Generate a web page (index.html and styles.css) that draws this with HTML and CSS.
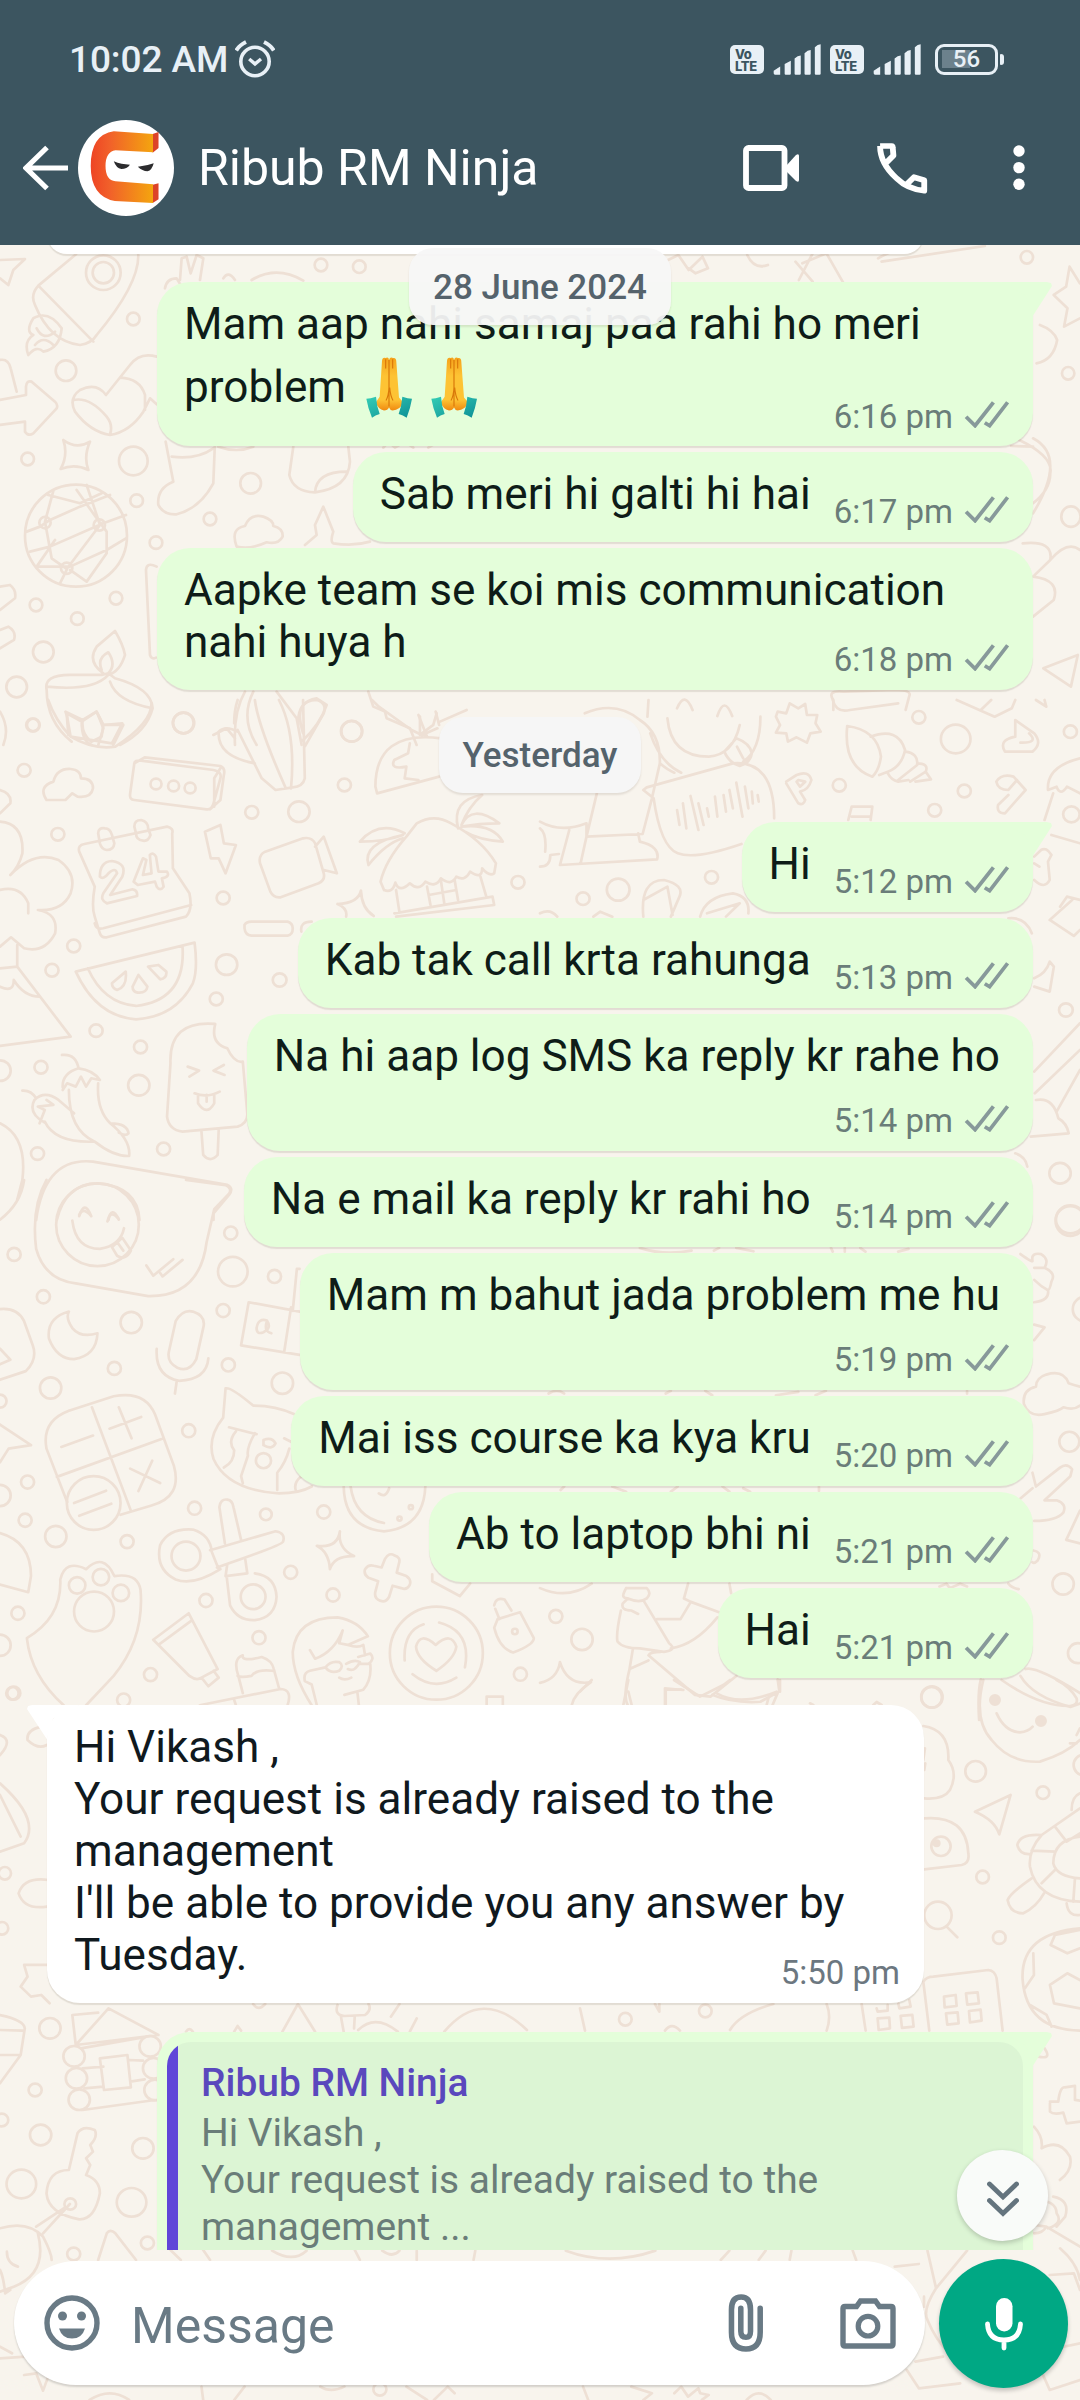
FILE: index.html
```html
<!DOCTYPE html>
<html lang="en">
<head>
<meta charset="utf-8">
<title>Ribub RM Ninja</title>
<link rel="stylesheet" href="styles.css">
</head>
<body>
<svg class="defs" aria-hidden="true">
  <defs>
    <linearGradient id="sleeve" x1="0" y1="0" x2="1" y2="1"><stop offset="0" stop-color="#35cdb5"/><stop offset="1" stop-color="#0d8f96"/></linearGradient>
    <linearGradient id="skin" x1="0" y1="0" x2="0" y2="1"><stop offset="0" stop-color="#f5a31c"/><stop offset=".35" stop-color="#fdc334"/><stop offset=".8" stop-color="#fdc334"/><stop offset="1" stop-color="#f08a10"/></linearGradient>
    <linearGradient id="magnet" x1="0" y1="0" x2="1" y2="0"><stop offset="0" stop-color="#ee4424"/><stop offset=".3" stop-color="#f1602a"/><stop offset="1" stop-color="#f4a50f"/></linearGradient>
    <symbol id="ticks" viewBox="1232 785 130 82" preserveAspectRatio="none">
      <path d="M1238 833L1264 860L1317 789M1292 851L1306 860L1358 789" fill="none" stroke="#87999a" stroke-width="11"/>
    </symbol>
    <symbol id="pray" viewBox="1098 333 138 184" preserveAspectRatio="none">
      <path d="M1146 345Q1147 333 1157 336Q1166 332 1167 342Q1170 332 1179 336Q1189 334 1189 348L1197 455L1210 470Q1200 493 1178 494Q1170 493 1167 485Q1163 494 1152 494Q1134 490 1127 470L1139 453Z" fill="url(#skin)"/>
      <path d="M1167 342V482M1157 340V368M1178 340V368M1167 425Q1166 450 1158 464M1169 425Q1171 450 1179 464" fill="none" stroke="#d9780a" stroke-width="3.5"/>
      <path d="M1099 459Q1111 459 1128 453Q1130 482 1139 505Q1126 508 1116 516Q1104 489 1099 459ZM1236 459Q1224 459 1207 453Q1205 482 1196 505Q1209 508 1220 516Q1231 489 1236 459Z" fill="url(#sleeve)"/>
    </symbol>
    <symbol id="bars" viewBox="676 132 140 94" preserveAspectRatio="none">
      <path d="M678 213L697 200V225H682Q678 225 678 221ZM710 193L728 183V222Q728 225 725 225H713Q710 225 710 222ZM739 176Q748 167 757 167V222Q757 225 754 225H742Q739 225 739 222ZM768 160Q777 150 786 150V222Q786 225 783 225H771Q768 225 768 222ZM798 142Q806 133 815 133V222Q815 225 812 225H801Q798 225 798 222Z" fill="#e8f0f6"/>
    </symbol>
  </defs>
</svg>

<header class="top">
  <div class="status">
    <span class="clock">10:02 AM</span>
    <svg class="alarm" viewBox="0 0 40 38"><g fill="none" stroke="#e8f0f6"><circle cx="20" cy="21.5" r="14.2" stroke-width="3.6"/><path d="M14.2 19L20 24L26 19" stroke-width="3.4"/><path d="M1.2 10.5Q4.5 5 11 2M38.8 10.5Q35.500 5 29 2" stroke-width="4"/></g></svg>
    <div class="radios">
      <span class="volte"><b>Vo</b><b>LTE</b></span>
      <svg class="bars"><use href="#bars"/></svg>
      <span class="volte"><b>Vo</b><b>LTE</b></span>
      <svg class="bars"><use href="#bars"/></svg>
      <span class="battery">56</span><i class="nub"></i>
    </div>
  </div>
  <div class="appbar">
    <svg class="back" viewBox="0 0 45 46"><path d="M45 23H4M24 2.500L3 23L24 43.500" fill="none" stroke="#fff" stroke-width="5.200"/></svg>
    <svg class="avatar" viewBox="226 360 279 288" preserveAspectRatio="none">
      <ellipse cx="365.500" cy="504" rx="139.500" ry="144" fill="#fff"/>
      <path d="M443 402L460 396V444L443 458ZM443 609L460 598V550L443 554Z" fill="#dc4328"/>
      <path d="M330 394L444 402V457L335 451Q306 456 306 498Q306 541 335 544L444 553V609L333 603Q263 590 263 498Q263 404 330 394Z" fill="url(#magnet)"/>
      <path d="M330 484Q352 494 377 494Q368 507 352 507Q337 505 330 484ZM446 490Q426 498 400 500Q413 513 428 514Q441 511 446 490Z" fill="#2c2c2e"/>
    </svg>
    <h1 class="title">Ribub RM Ninja</h1>
    <svg class="video" viewBox="0 0 56 46"><rect x="3" y="3" width="38.500" height="40" rx="2.500" fill="none" stroke="#fff" stroke-width="5.800"/><path d="M43 21L53 10Q56 8 56 11V35Q56 38 53 36L43 26Z" fill="#fff"/></svg>
    <svg class="call" viewBox="980 428 149 152" preserveAspectRatio="none"><path d="M989 437H1023Q1026 437 1026 442L1028 465L1004 490M989 437Q989 489 1037 533Q1070 566 1118 570V539L1088 530L1067 551" fill="none" stroke="#fff" stroke-width="17" stroke-linejoin="round"/></svg>
    <svg class="more" viewBox="0 0 12 46"><g fill="#fff"><circle cx="6" cy="6" r="5.700"/><circle cx="6" cy="22.600" r="5.700"/><circle cx="6" cy="39.200" r="5.700"/></g></svg>
  </div>
</header>

<main class="chat">
  <svg class="wallpaper" viewBox="0 245 1080 2155" aria-hidden="true">
    <g transform="translate(0 245) scale(.3333)">
      <path d="M0 45L75 42L40 75L25 120L0 100M228 28L115 122Q90 150 105 180Q150 290 240 300Q275 295 290 270Q440 90 410 0M115 122L280 290M100 220Q75 260 100 270Q70 290 85 330Q110 300 130 320Q180 310 185 250Q150 200 110 215ZM110 250Q130 290 165 260M105 300Q130 270 160 300M0 540L75 530V560Q85 575 100 565L170 490Q175 480 165 470L95 410Q80 405 78 425V450L0 465M0 345Q25 340 32 370L50 440M470 335Q420 320 390 360L318 450Q290 410 240 435Q205 460 225 500Q270 560 330 570Q390 560 430 500L450 460L470 478M360 398Q420 400 435 450V495M220 465Q270 455 320 515Q340 540 330 568M190 585Q230 615 270 590Q250 635 265 675Q225 655 182 672Q205 630 190 585Z"/>
      <path d="M497 590L520 710Q470 730 475 780Q490 810 530 808Q600 790 640 715L645 590M515 635Q590 645 640 610M655 605Q710 625 760 605M880 605L868 690Q880 740 945 742Q1045 730 1050 650L1045 605M945 742Q950 680 1040 680M1150 608Q1165 585 1185 608L1215 590L1240 608M1285 608L1315 590M915 900L950 870L945 840L970 785L1000 860Q990 890 1000 895Q1060 905 1110 890M710 905Q690 850 735 843Q750 805 790 815Q820 825 820 843Q850 850 848 875Q835 900 800 892Q750 915 710 905ZM540 105L545 40L560 35L572 85L590 30L610 40L600 105M495 130Q500 100 530 100L545 125M755 105Q830 60 910 107M670 100Q685 75 705 105"/>
      <path d="M160 738L135 830L155 940L200 972L300 840L260 720M145 750L240 775L305 745M80 860L120 845L150 825L240 785L330 750M90 920L150 905L310 835L378 810M110 965L165 885M115 965L210 965L320 915L378 880M210 975L260 1010L320 925V860L290 820L230 735M200 975L180 1015"/>
      <circle cx="228" cy="872" r="153"/><circle cx="135" cy="833" r="17"/><circle cx="298" cy="840" r="17"/><circle cx="200" cy="970" r="17"/>
      <path d="M470 965Q440 950 438 975L450 1230Q455 1245 468 1238M0 1025L30 1020Q50 1035 45 1060L0 1095M0 1155L25 1145Q50 1160 42 1185L0 1210M310 1285Q260 1250 290 1205L345 1158Q370 1200 375 1230Q360 1280 325 1290M305 1275Q290 1240 325 1222Q350 1260 325 1285M140 1335Q130 1290 210 1290L305 1290L325 1285L345 1300Q455 1330 458 1390Q440 1460 360 1500M140 1325Q280 1340 325 1290M140 1335Q140 1430 215 1490M330 1310Q350 1370 458 1390M205 1470L200 1405L245 1430L290 1400L310 1440L370 1440L340 1500M245 1430Q245 1490 275 1500M290 1400L310 1450L295 1500M0 1400Q30 1450 10 1500M735 1340Q700 1400 705 1500M760 1340Q720 1420 770 1500M830 1340L890 1420L905 1500M895 1440Q890 1370 950 1360L980 1380Q960 1440 905 1490M640 1470L680 1450L705 1480M1105 1340L1120 1385L1155 1400L1160 1420L1230 1450L1250 1500M1260 1415V1470L1300 1440L1310 1405M1320 1430L1400 1395"/>
      <circle cx="310" cy="83" r="52"/><circle cx="310" cy="83" r="32"/><circle cx="198" cy="377" r="31"/><circle cx="400" cy="648" r="43"/><circle cx="83" cy="642" r="19"/><circle cx="410" cy="767" r="19"/><circle cx="752" cy="715" r="31"/><circle cx="630" cy="822" r="19"/><circle cx="468" cy="893" r="19"/><circle cx="400" cy="222" r="19"/><circle cx="963" cy="60" r="19"/><circle cx="1078" cy="65" r="19"/><circle cx="108" cy="1080" r="19"/><circle cx="348" cy="1060" r="19"/><circle cx="232" cy="1121" r="19"/><circle cx="130" cy="1221" r="31"/><circle cx="50" cy="1326" r="31"/><circle cx="100" cy="1440" r="19"/><circle cx="550" cy="1434" r="31"/><circle cx="1055" cy="1459" r="31"/>
    </g>
    <g transform="translate(0 240) scale(.6887 .3333)">
      <path d="M970 60L985 45L1000 90L1020 50L1028 85L1010 100L1000 85M1085 45Q1095 90 1115 75M1155 65L1180 125M1165 70L1200 40L1225 130M1180 40L1160 120M1275 55Q1300 25 1325 20M1280 65L1430 18M1530 165L1548 140L1553 80L1568 130M1530 165L1550 205L1545 260L1568 235M1510 255Q1530 270 1535 300Q1530 360 1505 370M1500 595Q1550 650 1500 820M1480 600Q1530 650 1525 700Q1525 750 1500 790M1485 910Q1530 900 1525 960L1500 1010M1525 960Q1550 900 1568 930M1500 1010Q1540 1020 1530 1080L1500 1130M1515 1285L1565 1245L1555 1340ZM1500 620L1468 618M1210 1380Q1200 1350 1225 1355L1300 1350Q1325 1350 1320 1370L1315 1410M1210 1380V1410"/>
      <ellipse cx="1491" cy="52" rx="9" ry="19"/><ellipse cx="1551" cy="400" rx="9" ry="19"/><ellipse cx="1555" cy="830" rx="14" ry="31"/>
    </g>
    <g transform="translate(0 700) scale(.3444 .3333)">
      <path d="M140 0Q160 60 205 110Q270 150 335 140Q440 70 440 10M195 50L190 35L240 60L280 35L300 75L355 70L325 130L205 110ZM240 60Q235 100 265 125L295 110L300 75M135 300Q110 260 155 245Q165 205 205 207Q235 210 235 235Q270 235 270 265Q265 295 225 290L210 280L190 300ZM390 190Q390 180 410 182L620 210Q645 215 640 235L620 310Q615 330 600 328L390 300Q375 300 378 280ZM390 190L420 172L640 198Q655 205 650 225L640 300L610 328M640 205L622 235V320M0 270Q35 280 30 310L0 340M680 70Q680 30 690 0M740 0Q750 80 830 265M810 0Q860 100 845 265M880 0L885 235Q880 260 850 262L800 270L760 235L690 90M880 100Q850 0 920 0Q950 10 940 40L885 140M740 190Q630 170 635 95Q655 75 690 95M1080 0L1100 20L1195 90L1225 105L1270 85M1215 45L1240 110M1265 35L1275 75M1280 115Q1090 90 1090 260L1095 280L1275 230M1145 180L1185 160L1190 130M1145 180Q1130 210 1180 200L1175 235L1215 240"/>
      <path d="M0 365Q70 370 65 460Q55 500 30 525Q100 450 170 480Q225 520 205 580Q180 635 110 630Q170 640 160 700Q130 760 70 745L32 712L0 740M0 570Q60 555 82 610V640M50 735V800L205 1010L0 1038M0 805L50 800M0 860Q40 880 40 840Q70 890 115 890M275 560L230 455Q225 435 245 432L485 380Q505 385 500 400L502 505M275 560Q265 620 275 650L290 700Q295 715 310 712L540 650Q560 630 550 580L502 505M275 670Q280 690 300 685L555 615"/>
      <path d="M285 400Q285 382 305 385Q320 385 325 405L332 430Q330 450 310 450Q295 448 290 430ZM390 380Q390 360 410 360Q430 365 430 385L437 405Q430 425 415 422Q395 420 395 400ZM290 530Q290 485 325 483Q370 490 355 530L320 585L385 568Q400 570 398 588L310 610Q290 600 300 580L340 520Q335 500 315 520Q300 540 290 530ZM388 545L415 475L425 480L415 525L440 520L435 465Q445 455 453 470L460 515L485 515Q495 530 470 535L475 560Q465 575 455 560L450 545L400 555ZM595 395L640 375L650 430L685 435L655 520L635 475L612 475ZM770 455L880 415Q905 410 915 430L940 520Q945 540 925 550L815 592Q795 595 785 575L755 490Q750 465 770 455ZM915 440L940 410L978 520L940 510M710 675Q715 665 730 665H835Q850 670 850 685Q850 705 835 707H730Q712 705 710 685ZM980 612Q1040 610 1048 572Q1050 625 1085 648M980 612Q1010 625 1005 650M220 815L565 728Q575 810 560 850Q510 950 395 958Q280 950 220 815ZM255 805Q300 910 395 918Q540 900 530 740M325 850L365 815Q370 860 340 870Q325 865 325 850ZM385 860L402 825L428 860Q425 880 400 878Q385 875 385 860ZM430 800L460 795L483 815Q485 835 465 838ZM875 695Q870 665 905 665"/>
      <path d="M1115 570L1105 545Q1120 480 1180 410L1210 370Q1260 340 1310 370Q1400 420 1440 490L1435 520M1115 570Q1140 580 1148 548Q1160 580 1190 550Q1215 575 1235 545Q1265 565 1280 535Q1310 560 1325 530Q1350 545 1365 515Q1400 540 1400 505Q1420 530 1435 520M1150 570L1160 638M1145 640L1430 590L1435 615L1150 650M1395 530L1412 590M1240 560L1250 615M1280 540L1290 610M1320 540L1330 600M1245 585L1325 570M1175 400Q1100 360 1045 425Q1120 425 1170 405Q1050 430 1070 495M1170 415Q1120 430 1070 495M1330 385Q1310 300 1400 285Q1360 320 1340 375Q1370 310 1450 370Q1390 370 1340 380Q1430 370 1460 425Q1390 420 1350 395"/>
      <path d="M625 972Q490 960 495 1090L485 1250Q490 1290 530 1295L690 1280Q720 1270 718 1240L705 1085Q680 1090 660 1045Q610 1030 625 972ZM545 1100L578 1112L550 1130M650 1095L620 1112L652 1125M565 1180Q600 1195 638 1175M575 1185V1210Q600 1250 622 1210V1185M600 1185V1205M585 1295L590 1365Q610 1390 632 1365L635 1290M180 1065Q220 1060 228 1105M182 1162Q180 1120 228 1105Q270 1110 290 1140L265 1135L250 1160L235 1130L220 1160L195 1150L182 1170M200 1170Q200 1290 275 1325Q330 1370 375 1368Q380 1320 320 1270Q280 1230 285 1150M65 1172Q90 1170 105 1195M130 1268Q80 1240 100 1200Q130 1170 170 1200L215 1240M115 1270L130 1230L110 1220L155 1215L135 1200M130 1265Q160 1330 275 1325M320 1270Q370 1270 373 1300Q365 1310 345 1298M0 1270Q80 1310 65 1440L50 1500M105 1560Q130 1370 270 1385L660 1455Q680 1465 665 1485L620 1540V1560M165 1560Q190 1450 285 1450Q400 1460 405 1560M230 1545Q240 1520 262 1545M315 1560Q320 1530 343 1555"/>
      <circle cx="95" cy="75" r="19"/><circle cx="70" cy="211" r="19"/><circle cx="533" cy="69" r="31"/><circle cx="1021" cy="94" r="31"/><circle cx="1000" cy="255" r="19"/><circle cx="453" cy="252" r="16"/><circle cx="504" cy="258" r="16"/><circle cx="552" cy="264" r="16"/><circle cx="731" cy="337" r="19"/><circle cx="868" cy="335" r="31"/><circle cx="168" cy="403" r="19"/><circle cx="648" cy="594" r="19"/><circle cx="214" cy="738" r="19"/><circle cx="151" cy="811" r="19"/><circle cx="658" cy="794" r="31"/><circle cx="812" cy="840" r="20"/><circle cx="628" cy="897" r="19"/><circle cx="279" cy="992" r="19"/><circle cx="408" cy="1041" r="19"/><circle cx="119" cy="1102" r="19"/><circle cx="0" cy="1112" r="31"/><circle cx="403" cy="1156" r="31"/><circle cx="475" cy="1347" r="19"/><circle cx="109" cy="1361" r="19"/><circle cx="1504" cy="547" r="19"/>
    </g>
    <g transform="translate(540 700) scale(.3444 .3333)">
      <path d="M130 40Q220 0 290 60Q350 100 348 190Q370 210 390 218M348 190L325 295L298 402L135 410L165 280M398 25Q420 -30 443 30M515 48Q535 -15 558 48M370 55Q380 170 490 170Q560 165 580 75M535 155L570 115Q610 130 615 160Q610 190 580 198Q550 190 535 155ZM572 140L590 175M312 50L315 0M320 100Q350 190 410 218M640 50Q640 150 590 185M0 365Q60 400 135 370V410L118 490M85 390L58 495L340 478Q350 440 290 425L285 400M0 500Q30 500 30 465L55 462M0 385Q20 400 15 455M310 262L560 190Q680 180 680 355M310 262L300 270L330 295Q350 440 400 460Q450 480 585 432M398 330L405 375M415 310L425 385M437 288L460 390M460 310L475 375M485 325L490 350M508 290L515 350M533 285L540 335M550 270L560 325M570 248L588 350M595 260L605 325M615 275L618 310M632 285L635 305"/>
      <path d="M685 50L690 35L715 40L725 10L750 25L770 12L775 45L805 45L800 70L815 95L785 100L775 128L745 112L720 125L715 100L685 98L697 75ZM892 78Q980 90 990 170Q985 210 965 230Q880 200 892 78ZM960 110Q1040 80 1060 150Q1050 200 1010 215L985 225M1060 155Q1100 160 1095 195L1040 240M1095 190Q1130 190 1120 215L1075 245M1120 215L1135 238L1090 245M1010 220Q1020 240 1040 245L1070 240M1380 60L1435 100Q1460 130 1430 155H1350Q1330 120 1380 110ZM1420 100Q1450 130 1395 128M715 245L745 225Q780 210 788 240Q780 270 755 275L770 300Q765 318 750 310L715 250M745 245L755 260L770 245L750 240ZM1325 245Q1340 220 1375 230L1410 270L1350 340Q1325 340 1330 315L1360 285M1325 245Q1330 270 1360 270L1385 240M895 360L905 320H965L960 360M905 350H960M1568 175Q1470 200 1475 270L1500 260Q1510 290 1530 260L1568 280M1490 280L1465 360M1485 405L1568 430M850 0Q860 40 900 30L1040 10M1210 0L1320 50L1370 25L1380 0M1280 30L1310 0M1440 0L1470 20L1465 0M1435 470L1455 450Q1470 440 1485 465L1475 485L1480 540Q1465 570 1435 540M1435 490L1450 500M1545 600L1480 660L1550 708L1568 690M1510 620L1530 590L1568 600M1435 835Q1470 820 1480 785L1492 800L1480 875L1435 860M1360 655Q1410 650 1428 700M1568 970L1435 1115M1568 1050L1437 1180M1440 1200Q1490 1190 1505 1255Q1530 1270 1535 1300L1425 1310M1568 1110L1500 1235M300 650Q290 540 360 540Q420 555 405 590L380 650M300 600L370 560L385 645M465 650Q480 590 560 580Q610 590 605 640M485 640L580 610L540 650M0 640Q30 625 50 650M155 650L175 635L210 650M1380 1360Q1410 1370 1415 1400"/>
      <circle cx="1100" cy="52" r="19"/><circle cx="1207" cy="117" r="43"/><circle cx="1540" cy="95" r="19"/><circle cx="869" cy="256" r="19"/><circle cx="1232" cy="273" r="19"/><circle cx="1146" cy="331" r="19"/><circle cx="1543" cy="343" r="24"/><circle cx="498" cy="532" r="19"/><circle cx="227" cy="569" r="33"/><circle cx="125" cy="596" r="19"/><circle cx="1527" cy="930" r="20"/><circle cx="1510" cy="1420" r="31"/><circle cx="1540" cy="1558" r="42"/>
    </g>
    <g transform="translate(0 1180) scale(.3444)">
      <path d="M70 0Q60 70 0 115M135 0Q90 80 105 200Q130 290 220 300L430 337Q580 340 600 180L622 85L665 40Q675 25 655 15L540 0M230 105Q245 55 265 105M312 120Q325 70 345 115M210 118Q220 200 290 200Q350 190 360 140M325 195L355 168L380 205Q365 235 340 220ZM340 180L358 205M425 248L445 278L503 230M465 270L472 280L530 232M0 375Q50 370 70 410L95 480Q110 520 75 555L0 580M0 490L30 522L0 535M200 382Q135 400 142 460Q165 520 215 520Q280 510 283 445Q235 460 210 430Q190 400 200 382ZM510 410Q530 375 560 382Q600 395 590 430L570 520Q550 560 515 545Q485 530 490 500ZM455 490Q450 570 520 583Q600 580 605 518M513 585L508 620M722 355L700 480L870 508M722 355L870 382M845 370L825 500M870 258H862L850 380M745 430Q750 400 775 408Q790 430 765 442Q745 450 745 430M775 410Q765 440 788 445"/>
      <path d="M200 670L330 628Q420 610 450 680L505 830Q530 920 440 945L350 972M200 670Q120 700 135 780L195 935M267 660L380 960M165 862L475 750M178 775L270 742M318 722L410 688M345 660L382 750M378 838L465 880M442 815L402 903M215 938L308 902M230 975L323 940M0 710L90 770L25 780L0 820M655 605Q670 600 735 655Q800 655 855 680M655 605L648 690Q600 750 620 810Q660 900 810 910Q870 910 905 890M665 718L745 738M685 730Q660 760 680 785Q680 820 650 835M740 735Q715 780 720 800L700 860L705 880M765 755Q790 745 800 765Q790 785 765 770ZM825 750L845 760M840 780Q830 820 805 850V900M875 860Q850 880 860 905"/>
      <circle cx="272" cy="938" r="78"/><circle cx="283" cy="130" r="120"/><circle cx="765" cy="815" r="22"/>
      <path d="M998 890Q1000 1010 1115 1020Q1230 1010 1235 890M1018 890Q1030 980 1115 996M1100 910Q1120 925 1130 895M653 1055L637 950Q640 925 660 928Q675 930 678 950L700 1045M610 1075L800 1020Q830 1025 822 1050Q820 1060 630 1125M640 1130Q560 1180 510 1160Q450 1130 465 1060Q490 1010 560 1015Q610 1030 615 1080L635 1130M660 1115L655 1150L718 1142L712 1100M658 1150L668 1235Q690 1280 740 1278Q800 1270 803 1210Q800 1150 740 1142M920 1062Q980 1070 987 1020Q980 1070 1028 1092Q970 1090 958 1130Q955 1080 920 1062ZM1108 1125L1118 1100Q1130 1080 1145 1090Q1165 1095 1158 1115L1152 1140L1180 1150Q1195 1160 1190 1175Q1182 1192 1165 1185L1140 1178L1130 1210Q1120 1228 1105 1222Q1085 1215 1090 1195L1098 1165L1070 1155Q1055 1145 1060 1130Q1070 1115 1085 1120ZM1255 1145V1165L1335 1208L1365 1172"/>
      <path d="M0 1025Q90 1050 90 1150L82 1197L0 1175M185 1525Q90 1440 78 1330Q180 1270 175 1160Q190 1100 250 1130Q300 1080 332 1150Q400 1140 408 1190Q420 1330 330 1440L250 1525M445 1335L548 1258L632 1420L585 1445Q570 1455 550 1440ZM460 1350L555 1280M585 1445L605 1470L635 1445L620 1425M705 1490L692 1440Q675 1390 705 1380Q700 1400 760 1385Q790 1395 795 1420L810 1475M690 1440Q700 1445 730 1440Q745 1420 790 1425M580 1525L815 1478Q850 1480 835 1525M680 1510L685 1525M905 1525Q850 1440 850 1370Q860 1270 980 1270Q1040 1280 1068 1325L1010 1350Q1040 1360 1055 1350L1060 1380M900 1365L915 1390Q970 1370 995 1308L985 1345L1010 1350M945 1415Q960 1395 985 1400Q1000 1410 985 1425Q960 1435 945 1415ZM1005 1405Q1030 1390 1045 1400Q1030 1430 1010 1420M1040 1385L1075 1375Q1090 1390 1070 1405H1045M945 1415L900 1425Q880 1430 885 1455L905 1465L920 1525M1075 1405Q1080 1450 1055 1480L1000 1495M1038 1490L1042 1525M985 1445Q1000 1455 1020 1445M1175 1395Q1170 1310 1230 1290M1275 1285Q1370 1310 1350 1415M1198 1435Q1260 1485 1325 1445M1267 1425Q1210 1390 1208 1355Q1220 1310 1265 1350Q1310 1310 1325 1355Q1320 1390 1267 1425ZM1435 1235Q1440 1210 1465 1218L1485 1250M1435 1300L1445 1275L1510 1255L1550 1330Q1550 1350 1490 1372Q1450 1360 1435 1300ZM1438 1245L1450 1275M1413 1525V1500H1460V1525"/>
      <circle cx="540" cy="1092" r="42"/><circle cx="735" cy="1210" r="36"/><circle cx="224" cy="1177" r="24"/><circle cx="293" cy="1153" r="24"/><circle cx="351" cy="1199" r="24"/><circle cx="273" cy="1253" r="58"/><circle cx="1267" cy="1374" r="135"/><circle cx="1495" cy="1311" r="8"/>
      <circle cx="41" cy="216" r="19"/><circle cx="126" cy="339" r="19"/><circle cx="670" cy="154" r="19"/><circle cx="676" cy="266" r="43"/><circle cx="797" cy="280" r="19"/><circle cx="648" cy="379" r="19"/><circle cx="381" cy="414" r="31"/><circle cx="332" cy="547" r="19"/><circle cx="147" cy="604" r="31"/><circle cx="663" cy="537" r="19"/><circle cx="820" cy="590" r="31"/><circle cx="0" cy="642" r="19"/><circle cx="548" cy="728" r="19"/><circle cx="80" cy="877" r="19"/><circle cx="0" cy="916" r="31"/><circle cx="73" cy="988" r="19"/><circle cx="162" cy="1035" r="31"/><circle cx="369" cy="1050" r="19"/><circle cx="565" cy="953" r="19"/><circle cx="772" cy="971" r="17"/><circle cx="940" cy="964" r="19"/><circle cx="844" cy="1139" r="19"/><circle cx="967" cy="1205" r="19"/><circle cx="598" cy="1221" r="19"/><circle cx="752" cy="1329" r="19"/><circle cx="52" cy="1258" r="19"/><circle cx="0" cy="1351" r="31"/><circle cx="437" cy="1436" r="19"/><circle cx="40" cy="1490" r="19"/><circle cx="359" cy="1510" r="19"/><circle cx="1511" cy="1435" r="19"/><circle cx="1160" cy="983" r="6"/><circle cx="1193" cy="950" r="6"/>
    </g>
    <g transform="translate(540 1180) scale(.3444)">
      <path d="M1395 215Q1430 240 1430 235Q1425 210 1455 215Q1480 230 1465 255Q1500 270 1485 295Q1480 320 1475 320Q1480 350 1435 355M1435 255L1465 255M1435 290Q1455 310 1475 320M1435 420L1465 428L1435 465M1568 600Q1550 595 1535 590Q1520 550 1470 565Q1440 575 1440 600Q1400 610 1405 650Q1420 690 1465 680Q1510 670 1520 660Q1550 670 1568 655M1430 850L1440 890L1510 835Q1530 820 1545 840L1540 860L1465 930L1500 930Q1530 940 1520 965Q1500 990 1435 990M1395 925L1430 895M1568 960L1528 1045L1568 1055M1430 1075Q1460 1080 1445 1105Q1435 1115 1430 1110M0 1185Q80 1220 150 1172M250 1185L245 1195Q235 1215 255 1215L240 1230Q235 1250 265 1250L285 1260M250 1185H310Q325 1200 310 1215Q290 1230 255 1215M235 1250Q220 1320 225 1340Q240 1360 290 1360L360 1370Q400 1365 375 1345L300 1220M340 1275H408L438 1225L520 1255M430 1172L418 1215L438 1225M380 1360Q450 1350 515 1270M270 1360L260 1420Q240 1500 255 1525M260 1420L315 1395M315 1380Q320 1370 350 1370M315 1380L450 1495L495 1500L570 1440M365 1525V1480H410M500 1495Q560 1520 640 1515L695 1485L690 1450M690 1490L675 1525M58 1400Q80 1470 148 1458Q100 1490 92 1525M58 1400Q50 1450 0 1460M1280 1450Q1270 1490 1275 1568M1410 1420Q1440 1410 1568 1490M1395 1440Q1430 1500 1540 1530L1568 1520M1360 1172Q1370 1185 1390 1188M550 1172L555 1200"/>
      <circle cx="1540" cy="119" r="43"/><circle cx="1583" cy="375" r="36"/><circle cx="1537" cy="760" r="29"/><circle cx="1519" cy="1173" r="31"/><circle cx="1562" cy="1374" r="29"/><circle cx="46" cy="1267" r="19"/><circle cx="122" cy="1334" r="31"/><circle cx="1138" cy="1501" r="31"/>
      <path d="M290 197Q360 220 440 205M505 205L520 197M570 197L620 207M845 197L850 208M885 197V208M930 197L945 208M1040 208L1070 200M25 620Q50 605 70 620M365 620L380 612M480 612L500 625M685 625L750 615M800 625L830 612M1240 620V612M60 900L70 890M210 890L250 905M380 905L400 890M530 890L550 905M590 895L610 905M810 890V903M1160 1180L1180 1172L1190 1185L1220 1172L1240 1180"/>
    </g>
    <g transform="translate(580 1680) scale(.3333)">
      <path d="M1210 0Q1180 120 1235 180Q1290 250 1380 245Q1460 220 1500 180M1265 0Q1380 80 1470 78Q1495 75 1490 55Q1470 20 1430 0M1250 100Q1275 155 1320 157Q1345 155 1358 140M1490 190L1470 190M1490 165L1500 145M1030 138Q1110 150 1105 240Q1135 280 1110 330Q1090 360 1033 355M1035 205L1030 240M1036 250L1033 270M1033 415Q1160 405 1165 520Q1170 550 1145 555L1033 568M1185 395L1292 345L1258 463Q1245 420 1185 395ZM1100 740L1132 772M1500 385L1385 465Q1345 510 1350 560Q1370 660 1500 665M1385 465Q1320 460 1312 495Q1320 525 1352 522M1425 440L1460 485L1500 460M1355 512L1425 515M1500 470Q1420 480 1420 550Q1430 590 1500 595M1425 570L1385 610M1355 595Q1290 640 1283 660Q1290 700 1330 700Q1370 680 1392 640M1485 595L1480 665M1460 670Q1465 710 1500 705M1475 390Q1475 350 1500 340M1030 905Q1040 890 1060 890L1225 870Q1245 872 1250 895L1268 1052M1030 905L1048 1052M1092 950L1127 945L1130 978L1094 982ZM1158 940L1193 937L1197 970L1162 974ZM1098 1000L1133 997L1136 1030L1102 1034ZM1167 993L1202 989L1205 1022L1170 1027ZM890 985L893 995L923 992V975M893 1015L928 1013L930 1045L896 1050ZM955 970L958 985L992 980L988 960M962 1008L997 1005L1001 1040L966 1044ZM845 972L857 1052M1500 745Q1320 760 1328 900Q1340 1050 1500 1052M1412 795L1425 765L1500 750M1412 795L1462 820L1500 805M1360 820L1362 885L1335 925M1462 880L1410 915L1422 970L1500 985M1462 880L1500 900M1350 975L1400 1005L1415 1040M740 972Q755 1010 740 1052M450 1050Q480 1000 580 972M225 972L238 995V972M255 1052Q275 1025 300 1052M0 985L15 1052M145 0L130 75M145 35L155 75M255 75V25L310 30M0 35L35 0M282 0L360 50L430 15L450 0M410 40Q480 80 590 35M600 0V35M560 75L565 55M700 75L690 70M880 75L890 66L905 75M1375 1130Q1420 1140 1390 1100M1410 1265H1435Q1440 1220 1455 1222L1485 1218V1260L1500 1262M1410 1270V1295Q1420 1305 1450 1298L1460 1330L1500 1325M1362 1340Q1390 1370 1385 1405Q1440 1375 1470 1430Q1480 1470 1440 1500"/>
      <circle cx="1055" cy="52" r="31"/><circle cx="1187" cy="274" r="31"/><circle cx="1389" cy="338" r="19"/><circle cx="1208" cy="591" r="19"/><circle cx="1258" cy="773" r="19"/><circle cx="1074" cy="706" r="41"/><circle cx="1083" cy="499" r="29"/><circle cx="1512" cy="255" r="31"/><circle cx="136" cy="1018" r="19"/><circle cx="376" cy="993" r="19"/>
      <g class="solid"><circle cx="1245" cy="60" r="14"/><circle cx="1383" cy="123" r="14"/><circle cx="1070" cy="490" r="8"/></g>
    </g>
    <g transform="translate(0 1680) scale(.6887 .3333)">
      <path d="M60 140Q38 150 40 180Q55 210 68 195M0 165Q20 180 0 225M0 310Q60 420 35 490L0 515M0 345L30 470M70 855L35 855L40 890L30 920L45 950L60 945L72 970M70 600Q35 590 27 640Q35 690 68 680"/>
      <ellipse cx="18" cy="40" rx="9" ry="19"/><ellipse cx="7" cy="580" rx="9" ry="19"/><ellipse cx="3" cy="745" rx="9" ry="19"/>
    </g>
    <g transform="translate(0 2000) scale(.3444 .3333)">
      <path d="M0 45Q70 60 72 85L60 165L0 250M0 90L65 92M0 165H58M220 135L315 25L460 105L220 135L210 45L285 38M235 145L415 112M240 205L300 200M375 180L415 182M245 265L300 260M378 245L420 238M240 330L450 300M290 175L370 165L380 262L302 270ZM820 95L865 12L915 95M980 15Q970 45 1000 48L1060 45Q1080 30 1070 12M990 50L998 95M1030 50L1028 85M1040 90Q1090 40 1155 95M1135 50L1160 12M1190 95L1210 55M1290 95Q1400 -40 1530 90M540 95Q550 80 560 95M680 95L690 78L700 92M735 12Q750 35 770 12M200 510L225 400Q240 375 275 390Q285 410 262 435L270 455L250 475L262 495L250 525Q290 540 290 580Q275 660 230 658Q140 640 135 580Q140 510 200 510ZM203 612L125 700M185 625L105 680M0 685Q80 660 125 710Q150 760 150 780M110 700Q140 820 40 860L0 875M20 755Q20 790 52 800M0 810Q10 830 15 880L30 870M0 1040L35 1060M0 1075L75 1070M285 780L310 700Q320 685 335 700L395 780M495 750L525 780M590 750L610 780M790 752Q850 790 890 752M1030 750L1045 780M1110 752Q1140 775 1160 752M1210 780V752M1375 780L1380 752M70 1125L105 1120L125 1172L140 1130M585 1160L590 1200M710 1160L680 1200M930 1160Q960 1180 1000 1160M1180 1160L1240 1200M1260 1200L1300 1160L1320 1180M260 1200Q320 1160 375 1200"/>
      <circle cx="145" cy="85" r="31"/><circle cx="102" cy="270" r="19"/><circle cx="5" cy="360" r="19"/><circle cx="118" cy="405" r="31"/><circle cx="415" cy="445" r="31"/><circle cx="62" cy="552" r="43"/><circle cx="382" cy="607" r="43"/><circle cx="215" cy="169" r="31"/><circle cx="222" cy="235" r="31"/><circle cx="230" cy="299" r="31"/><circle cx="436" cy="139" r="31"/><circle cx="446" cy="205" r="31"/><circle cx="450" cy="270" r="31"/><circle cx="204" cy="612" r="17"/><circle cx="428" cy="729" r="19"/><circle cx="214" cy="762" r="19"/><circle cx="1103" cy="1168" r="19"/>
    </g>
    <g transform="translate(540 2000) scale(.3444 .3333)">
      <path d="M75 752Q200 800 335 752M525 780L550 752M635 780L655 752M725 780L730 752M908 752L918 780M1125 752L1150 865M1240 752L1150 865Q1110 930 1125 960Q1150 1020 1180 1050M1030 800L1100 792M1435 675L1470 680L1568 740M1435 700Q1460 700 1470 680M1510 745Q1560 790 1568 840M1480 825L1550 820L1568 870M1475 1050L1568 1030M1450 1100L1480 1170L1568 1140M1090 1085L1170 1070M1065 1110L1100 1165L1220 1150M1115 890V920M125 1160L140 1200M265 1160L325 1180L300 1200M390 1180L410 1160L430 1190L460 1165L465 1180L490 1185L470 1200M600 1200Q635 1160 670 1200M1435 600Q1500 600 1500 640Q1520 670 1475 685M1490 590Q1540 600 1525 650L1500 680"/>
    </g>
  </svg>

  <section class="thread">
    <div class="bubble in past"></div>
    <div class="bubble out tail wide prayer">
      <p>Mam aap nahi samaj paa rahi ho meri<br><span class="emojiline">problem <svg class="emoji" role="img" aria-label="folded hands"><use href="#pray"/></svg><svg class="emoji" role="img" aria-label="folded hands"><use href="#pray"/></svg></span></p>
      <span class="meta">6:16 pm<svg><use href="#ticks"/></svg></span>
    </div>
    <div class="bubble out"><p>Sab meri hi galti hi hai</p><span class="meta">6:17 pm<svg><use href="#ticks"/></svg></span></div>
    <div class="bubble out wide"><p>Aapke team se koi mis communication<br>nahi huya h</p><span class="meta">6:18 pm<svg><use href="#ticks"/></svg></span></div>

    <div class="day">Yesterday</div>

    <div class="bubble out tail"><p>Hi</p><span class="meta">5:12 pm<svg><use href="#ticks"/></svg></span></div>
    <div class="bubble out"><p>Kab tak call krta rahunga</p><span class="meta">5:13 pm<svg><use href="#ticks"/></svg></span></div>
    <div class="bubble out stacked"><p>Na hi aap log SMS ka reply kr rahe ho</p><span class="meta">5:14 pm<svg><use href="#ticks"/></svg></span></div>
    <div class="bubble out"><p>Na e mail ka reply kr rahi ho</p><span class="meta">5:14 pm<svg><use href="#ticks"/></svg></span></div>
    <div class="bubble out stacked"><p>Mam m bahut jada problem me hu</p><span class="meta">5:19 pm<svg><use href="#ticks"/></svg></span></div>
    <div class="bubble out"><p>Mai iss course ka kya kru</p><span class="meta">5:20 pm<svg><use href="#ticks"/></svg></span></div>
    <div class="bubble out"><p>Ab to laptop bhi ni</p><span class="meta">5:21 pm<svg><use href="#ticks"/></svg></span></div>
    <div class="bubble out"><p>Hai</p><span class="meta">5:21 pm<svg><use href="#ticks"/></svg></span></div>

    <div class="bubble in tail wide"><p>Hi Vikash ,<br>Your request is already raised to the<br>management<br>I'll be able to provide you any answer by<br>Tuesday.</p><span class="meta">5:50 pm</span></div>

    <div class="bubble out tail quoted">
      <blockquote class="quote"><strong>Ribub RM Ninja</strong><p>Hi Vikash ,<br>Your request is already raised to the<br>management ...</p></blockquote>
    </div>
  </section>

  <div class="day floating">28 June 2024</div>
  <button class="jump" aria-label="Scroll to latest"><svg viewBox="0 0 32 36"><path d="M2.500 3L16 16L29.500 3M2.500 19.500L16 32.500L29.500 19.500" fill="none" stroke="#64747e" stroke-width="4.800" stroke-linecap="round"/></svg></button>

  <footer class="composer">
    <div class="field">
      <svg class="smile" viewBox="0 0 56 56"><circle cx="28" cy="28" r="25" fill="none" stroke="#697a85" stroke-width="5.400"/><g fill="#697a85"><circle cx="18.500" cy="21" r="4.500"/><circle cx="37.500" cy="21" r="4.500"/><path d="M15 33.500H41Q38 43.500 28 43.500Q18 43.500 15 33.500Z"/></g></svg>
      <span class="placeholder">Message</span>
      <svg class="clip" viewBox="548 886 104 170" preserveAspectRatio="none"><path d="M641 928V998Q641 1047 600 1047Q558 1047 558 998V932Q558 895 586 895Q613 895 613 932V995Q613 1013 600 1013Q585 1013 585 995V928" fill="none" stroke="#697a85" stroke-width="16" stroke-linecap="round"/></svg>
      <svg class="camera" viewBox="0 0 56 51"><path d="M5 8.500H16.500L20.500 3H35.500L39.500 8.500H51Q53 8.500 53 10.500V46Q53 48 51 48H5Q3 48 3 46V10.500Q3 8.500 5 8.500Z" fill="none" stroke="#697a85" stroke-width="5.400"/><circle cx="28" cy="28.200" r="9.800" fill="none" stroke="#697a85" stroke-width="5.200"/></svg>
    </div>
    <button class="mic" aria-label="Record voice message"><svg viewBox="0 0 38 54"><rect x="11" y="1" width="16.500" height="33.500" rx="8.200" fill="#fff"/><path d="M2.500 27Q3.500 43 19 43Q34.500 43 35.500 27M19 43V51" fill="none" stroke="#fff" stroke-width="4.800" stroke-linecap="round"/></svg></button>
  </footer>
</main>
</body>
</html>
```
FILE: styles.css
```css
* { box-sizing: border-box; margin: 0; padding: 0; }
body { width: 1080px; height: 2400px; overflow: hidden; display: flex; flex-direction: column; font-family: Roboto, "Noto Sans", sans-serif; background: #f8f4ed; }
svg { display: block; flex: none; }
button { border: 0; }
.defs { position: absolute; width: 0; height: 0; }

.top { height: 245px; background: #3c5560; color: #fff; flex: none; }
.status { height: 99px; padding: 38px 76px 0 69px; display: flex; align-items: flex-start; color: #e8f0f6; }
.clock { font-size: 37px; font-weight: 500; line-height: 43px; letter-spacing: -.1px; }
.alarm { width: 40px; height: 38px; margin: 2px 0 0 7px; }
.radios { margin: 6px 0 0 auto; display: flex; align-items: center; height: 31px; }
.volte { width: 34px; height: 29px; border-radius: 5px; background: #e8f0f6; color: #3c5560; font: 800 13px/12px Inter, sans-serif; letter-spacing: -.4px; padding: 3px 0 0 5px; display: flex; flex-direction: column; }
.volte b { font-weight: 800; }
.bars { width: 48px; height: 31px; margin: 0 9px; }
.battery { width: 63px; height: 31px; margin-left: 5px; border: 3.500px solid #e8f0f6; border-radius: 9px; font-size: 24px; font-weight: 500; line-height: 25px; text-align: center; background: linear-gradient(#6c818c, #6c818c) 3.500px 3px / 28px 18px no-repeat; }
.nub { width: 4px; height: 11px; border-radius: 1px 3px 3px 1px; background: #e8f0f6; margin-left: 2px; }
.appbar { height: 138px; padding: 0 55px 0 23px; display: flex; align-items: center; }
.back { width: 45px; height: 46px; }
.avatar { width: 96px; height: 96px; margin-left: 10px; }
.title { font-size: 50px; font-weight: 400; line-height: 58px; margin: -1px 0 0 24px; }
.video { width: 56px; height: 46px; margin-left: auto; }
.call { width: 51px; height: 51px; margin-left: 78px; }
.more { width: 12px; height: 46px; margin-left: 85px; }

.chat { position: relative; flex: 1; display: flex; flex-direction: column; }
.wallpaper { position: absolute; left: 0; top: 0; width: 1080px; height: 2155px; fill: none; stroke: #eee0d5; }
.wallpaper path, .wallpaper circle, .wallpaper ellipse { stroke-width: 2.700px; vector-effect: non-scaling-stroke; stroke-linejoin: round; stroke-linecap: round; }
.wallpaper .solid { fill: #eee0d5; }

.thread { position: relative; height: 2005px; overflow: hidden; display: flex; flex-direction: column; padding: 0 47px; flex: none; }
.bubble { position: relative; flex: none; display: flex; align-items: flex-end; min-height: 90px; margin-bottom: 6px; border-radius: 33px; padding: 16px 24px 11px 27px; box-shadow: 0 2px 1px rgba(80, 60, 40, .13); color: #0e1c18; font-size: 44.100px; line-height: 52px; white-space: nowrap; }
.bubble p { padding-bottom: 11px; }
.out { align-self: flex-end; background: #e4feda; }
.in { align-self: flex-start; background: #fff; color: #10191e; }
.bubble.past { width: 877px; min-height: 0; height: 40px; margin: -31px 0 28px; }
.tail::after { content: ""; position: absolute; top: 0; width: 52px; height: 34px; background: inherit; }
.out.tail::after { right: -19px; clip-path: polygon(0 0, 90% 0, 98% 3%, 100% 12%, 63% 100%, 50% 40%); }
.in.tail::after { left: -20px; clip-path: polygon(100% 0, 10% 0, 2% 3%, 0 12%, 38% 100%, 50% 40%); }
.meta { display: flex; align-items: flex-end; margin-left: 23px; color: #6a7d79; font-size: 33px; line-height: 39px; }
.meta svg { width: 45px; height: 27px; margin: 0 0 8px 11px; }
.in .meta { color: #6c7780; }
.wide { display: grid; width: 876px; }
.wide > * { grid-area: 1 / 1; }
.wide > .meta { justify-self: end; align-self: end; }
.stacked { flex-direction: column; padding-right: 24px; }
.stacked p { padding: 0 9px 0 0; }
.stacked .meta { margin-top: 19px; }
.prayer { height: 164px; }
.emojiline { display: flex; align-items: flex-start; padding-top: 11px; height: 75px; }
.emoji { width: 46px; height: 61px; margin: -4px 0 0 19px; }
.emoji:first-of-type { margin-left: 20px; }
.day { align-self: center; flex: none; height: 76px; margin: 21px 0 29px; padding: 16px 24px 0; border-radius: 24px; background: #f6f6f6; color: #55636c; font-size: 35px; line-height: 46px; font-weight: 500; box-shadow: 0 2px 2px rgba(80, 60, 40, .12); }
.floating { position: absolute; top: 3px; left: 409px; width: 262px; margin: 0; height: 77px; text-align: center; padding: 17px 0 0; background: rgba(247, 247, 247, .94); white-space: nowrap; }
.in.wide { width: 877px; margin: 21px 0 29px; }
.quoted { width: 876px; height: 330px; padding: 10px; align-items: stretch; }
.quote { flex: 1; background: linear-gradient(90deg, #5f47d8 11px, #dcf5d4 11px); border-radius: 24px; padding: 14px 23px 0 34px; font-size: 38.900px; line-height: 47px; color: #6a7d79; }
.quote strong { display: block; font-weight: 500; color: #5a48bd; line-height: 53px; }

.jump { position: absolute; left: 957px; top: 1905px; width: 91px; height: 91px; border-radius: 50%; background: #f9fbf9; box-shadow: 0 2px 5px rgba(0, 0, 0, .2); display: grid; place-items: center; }
.jump svg { width: 32px; height: 36px; margin-top: 7px; }

.composer { position: relative; display: flex; padding: 9px 12px 0 14px; height: 150px; }
.field { width: 911px; height: 124px; margin-top: 2px; border-radius: 62px; background: #fff; box-shadow: 0 2px 2px rgba(0, 0, 0, .15); display: flex; align-items: center; padding: 0 29px 0 30px; }
.smile { width: 56px; height: 56px; }
.placeholder { flex: 1; margin: 5px 0 0 31px; font-size: 50px; line-height: 58px; color: #697a85; }
.clip { width: 36px; height: 58px; }
.camera { width: 56px; height: 51px; margin-left: 76px; }
.mic { width: 129px; height: 129px; margin-left: 14px; border-radius: 50%; background: #00a884; box-shadow: 0 3px 4px rgba(0, 0, 0, .2); display: grid; place-items: center; }
.mic svg { width: 38px; height: 54px; }
```
